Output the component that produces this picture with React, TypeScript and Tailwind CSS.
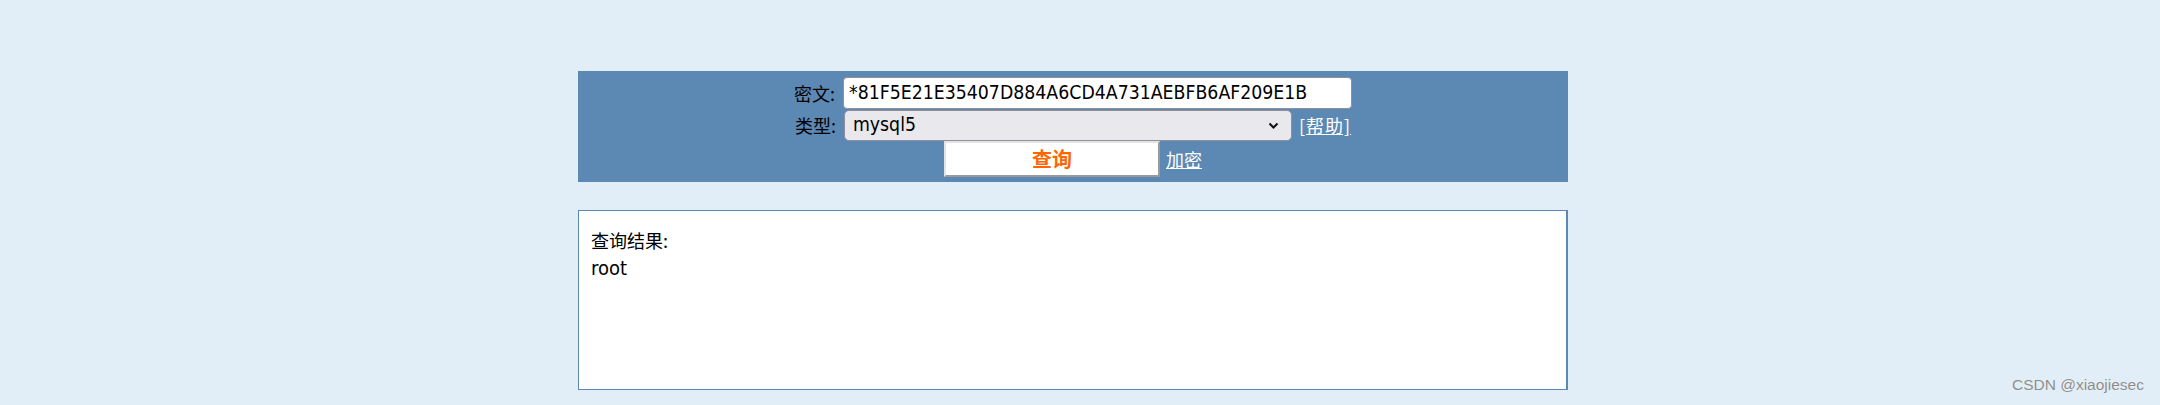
import React from 'react';

const latin = "font-['DejaVu_Sans_Condensed','DejaVu_Sans','Noto_Sans_CJK_SC',sans-serif]";
const cjk = "font-['Noto_Sans_CJK_SC',sans-serif]";

export default function App() {
  const [hash, setHash] = React.useState('*81F5E21E35407D884A6CD4A731AEBFB6AF209E1B');
  const [type, setType] = React.useState('mysql5');

  return (
    <div className="relative h-[405px] w-full overflow-hidden bg-[#e1eef7] pt-[71px]">
      {/* 查询面板 */}
      <div className="ml-[578px] flex w-[990px] flex-col items-center bg-[#5c88b4] pt-[5px] pb-[5px] text-black">
        <div className="flex h-[33px] items-center gap-[8px]">
          <span className={`${cjk} text-[18px] leading-none`}>密文:</span>
          <input
            value={hash}
            onChange={(e) => setHash(e.target.value)}
            className={`${latin} h-[32px] w-[509px] rounded-[4px] border border-[#8f8f9d] bg-white px-[5px] text-[19.3px] text-black outline-none`}
          />
        </div>
        <div className="flex h-[32px] items-center">
          <span className={`${cjk} mr-[8px] text-[18px] leading-none`}>类型:</span>
          <div className="relative">
            <select
              value={type}
              onChange={(e) => setType(e.target.value)}
              className={`${latin} h-[31px] w-[448px] appearance-none rounded-[5px] border border-[#8f8f9d] bg-[#e9e8ed] pl-[8px] text-[19.3px] text-black outline-none`}
            >
              <option value="mysql5">mysql5</option>
              <option value="mysql">mysql</option>
              <option value="md5">md5</option>
              <option value="sha1">sha1</option>
            </select>
            <svg
              className="pointer-events-none absolute right-[13px] top-[12px]"
              width="11"
              height="8"
              viewBox="0 0 11 8"
            >
              <path d="M1.5 1.5 L5.5 5.5 L9.5 1.5" fill="none" stroke="#111" strokeWidth="2" />
            </svg>
          </div>
          <a href="#" className={`${cjk} ml-[7px] text-[18px] leading-none tracking-[1px] text-white underline`}>
            [帮助]
          </a>
        </div>
        <div className="flex h-[36px] items-center gap-[6px]">
          <button
            className={`${cjk} h-[36px] w-[216px] border-2 border-t-[#e4e4e4] border-l-[#e4e4e4] border-r-[#9a9a9a] border-b-[#9a9a9a] bg-white text-[20px] font-bold leading-none text-[#ff6600]`}
          >
            查询
          </button>
          <a href="#" className={`${cjk} text-[18px] leading-none text-white underline`}>
            加密
          </a>
        </div>
      </div>

      {/* 查询结果 */}
      <div className="mt-[28px] ml-[578px] h-[180px] w-[990px] border border-r-2 border-[#5c88b4] bg-white pt-[16px] pl-[12px] text-black">
        <div className={`${cjk} text-[18px] leading-[26px]`}>查询结果:</div>
        <div className={`${latin} text-[20px] leading-[30px]`}>root</div>
      </div>

      <div className="absolute right-[16px] bottom-[9px] font-['Liberation_Sans',sans-serif] text-[15.5px] text-[#8c8c8c] [text-shadow:0_0_1px_#ffffff]">
        CSDN @xiaojiesec
      </div>
    </div>
  );
}
